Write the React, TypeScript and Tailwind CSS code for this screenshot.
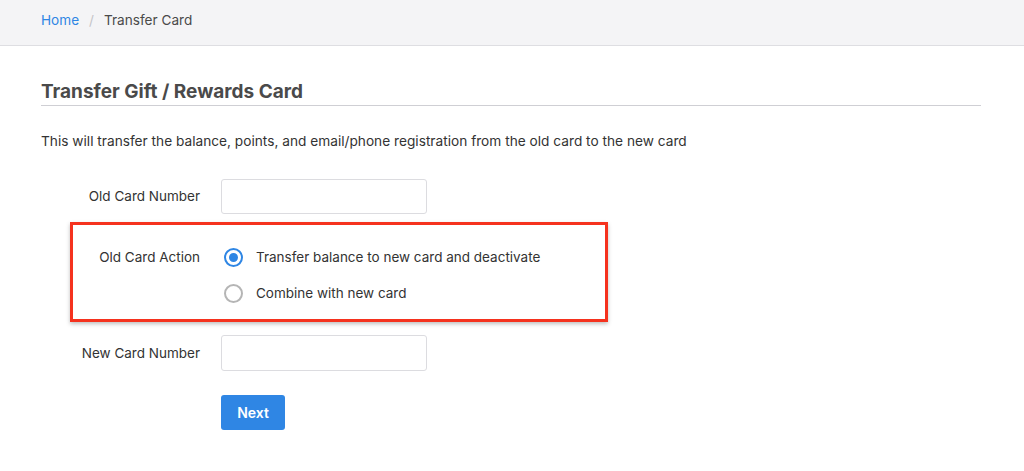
import { useState } from "react"

const Radio = ({ checked, label, onClick }: { checked: boolean; label: string; onClick: () => void }) => (
  <label className="ml-[3px] flex h-9 cursor-pointer items-center gap-[13px]" onClick={onClick}>
    <span
      className={
        checked
          ? "flex h-[19px] w-[19px] items-center justify-center rounded-full border-2 border-[#2f86e4] bg-white"
          : "flex h-[19px] w-[19px] items-center justify-center rounded-full border-2 border-[#b5b5b5] bg-white"
      }
    >
      {checked && <span className="h-[9px] w-[9px] rounded-full bg-[#2f86e4]" />}
    </span>
    <span>{label}</span>
  </label>
)

export default function App() {
  const [action, setAction] = useState("transfer")

  return (
    <div className="min-h-[471px] bg-white text-[14px] text-[#333] [font-family:Inter,'Liberation_Sans',sans-serif]">
      <nav className="flex h-[46px] items-start gap-[10px] border-b border-[#dedee2] bg-[#f4f4f6] px-[41px] pt-[10px] text-[13.6px] leading-5">
        <a href="#" className="text-[#2f86e4]">Home</a>
        <span className="text-[#c4c4c8]">/</span>
        <span className="text-[#4a4a4a]">Transfer Card</span>
      </nav>

      <main className="px-[41px]">
        <h1 className="mt-[34px] mr-[2px] border-b border-[#cfcfd4] pb-[1px] text-[19px] leading-6 font-bold text-[#4a4a4a]">
          Transfer Gift / Rewards Card
        </h1>
        <p className="mt-[25px] leading-5 text-[13.7px]">
          This will transfer the balance, points, and email/phone registration from the old card to the new card
        </p>

        <form className="mt-[28px] flex flex-col text-[13.5px]" onSubmit={(e) => e.preventDefault()}>
          <div className="flex items-center gap-[21px]">
            <span className="w-[159px] text-right">Old Card Number</span>
            <input className="h-[35px] w-[206px] rounded-[3px] border border-[#dcdce0] px-2 outline-none" />
          </div>

          <div className="relative mt-[25px] flex gap-[21px]">
            <div className="pointer-events-none absolute top-[-17px] bottom-[-11px] left-[29px] w-[538px] border-[3px] border-[#f5321e] shadow-[0_2px_4px_rgba(0,0,0,0.25)]" />
            <span className="flex h-9 w-[159px] items-center justify-end">Old Card Action</span>
            <div className="flex flex-col">
              <Radio
                checked={action === "transfer"}
                label="Transfer balance to new card and deactivate"
                onClick={() => setAction("transfer")}
              />
              <Radio
                checked={action === "combine"}
                label="Combine with new card"
                onClick={() => setAction("combine")}
              />
            </div>
          </div>

          <div className="mt-[24px] flex items-center gap-[21px]">
            <span className="w-[159px] text-right">New Card Number</span>
            <input className="h-9 w-[206px] rounded-[3px] border border-[#dcdce0] px-2 outline-none" />
          </div>

          <div className="mt-[24px] pl-[180px]">
            <button className="h-[35px] w-16 rounded-[3px] bg-[#2f86e4] text-[14px] font-semibold text-white">Next</button>
          </div>
        </form>
      </main>
    </div>
  )
}
